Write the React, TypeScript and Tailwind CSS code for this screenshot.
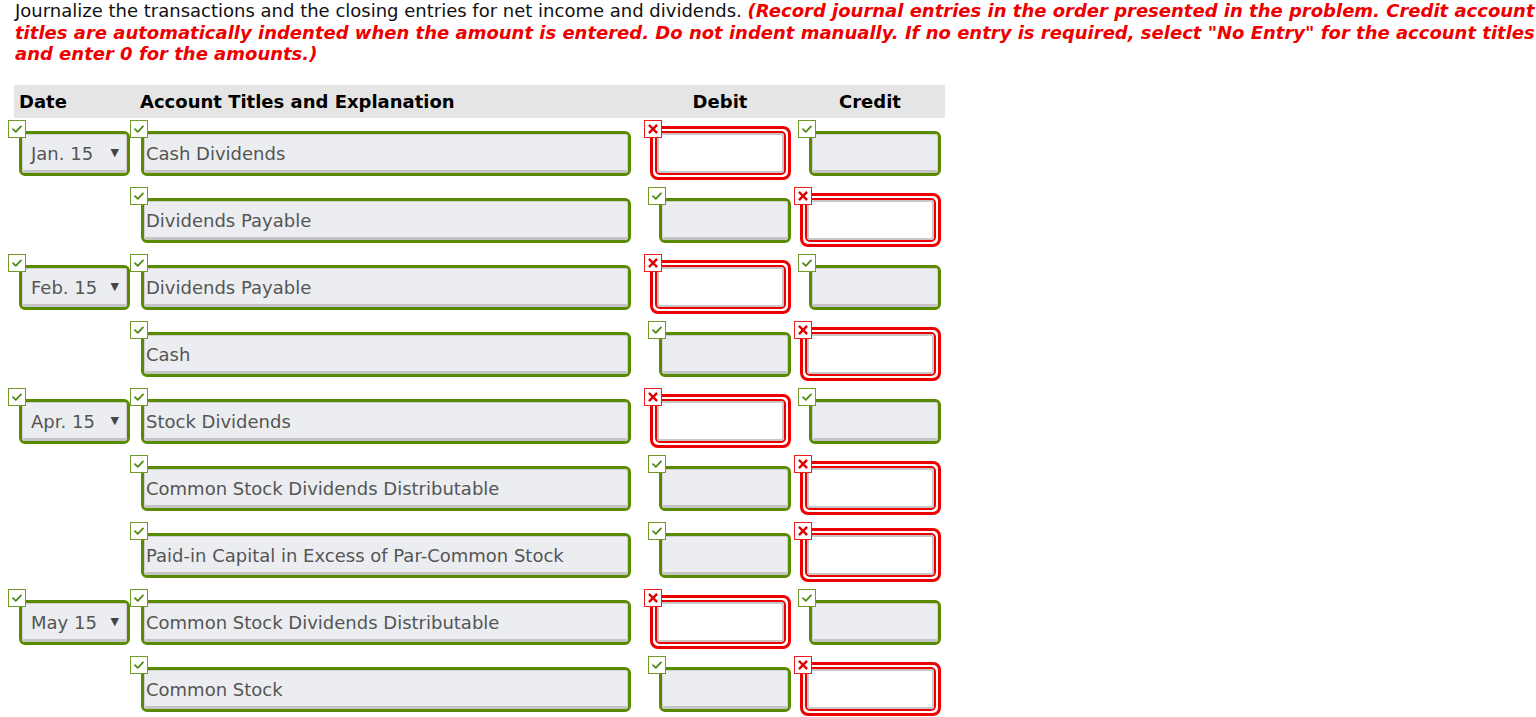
import React from "react";

type Row = {
  date?: string;
  account: string;
  debitRed: boolean;
};

const rows: Row[] = [
  { date: "Jan. 15", account: "Cash Dividends", debitRed: true },
  { account: "Dividends Payable", debitRed: false },
  { date: "Feb. 15", account: "Dividends Payable", debitRed: true },
  { account: "Cash", debitRed: false },
  { date: "Apr. 15", account: "Stock Dividends", debitRed: true },
  { account: "Common Stock Dividends Distributable", debitRed: false },
  { account: "Paid-in Capital in Excess of Par-Common Stock", debitRed: false },
  { date: "May 15", account: "Common Stock Dividends Distributable", debitRed: true },
  { account: "Common Stock", debitRed: false },
];

function CheckBadge({ className }: { className: string }) {
  return (
    <div className={`absolute w-[18px] h-[18px] bg-white border border-[#6f9a2a] flex items-center justify-center ${className}`}>
      <svg width="12" height="10" viewBox="0 0 12 10">
        <path d="M2 5.2 L4.8 7.8 L10 2.4" fill="none" stroke="#4f8a10" strokeWidth="1.8" strokeLinecap="round" strokeLinejoin="round" />
      </svg>
    </div>
  );
}

function XBadge() {
  return (
    <div className="absolute -left-[6px] -top-[6px] w-[18px] h-[18px] bg-white border border-[#ee1c1c] flex items-center justify-center">
      <svg width="10" height="10" viewBox="0 0 10 10">
        <path d="M1.8 1.8 L8.2 8.2 M8.2 1.8 L1.8 8.2" fill="none" stroke="#e00000" strokeWidth="2.4" strokeLinecap="square" />
      </svg>
    </div>
  );
}

function GreenField({ w, children }: { w: string; children?: React.ReactNode }) {
  return (
    <div className={`relative ${w} h-[45px]`}>
      <div className="h-full rounded-[6px] border-[3px] border-[#5a8a00]">
        <div className="h-full rounded-[3px] bg-[#ebedf0] border border-[#cfcfcf] border-b-[3px] border-b-[#c4c4c4] flex items-center pl-[1px] pt-[3px] text-[18px] text-[#555555] whitespace-nowrap">
          {children}
        </div>
      </div>
      <CheckBadge className="-left-[11px] -top-[11px]" />
    </div>
  );
}

function RedField() {
  return (
    <div className="relative w-[141px] h-[54px]">
      <div className="h-full rounded-[8px] border-[3px] border-[#ee0000] bg-white p-[2px]">
        <div className="h-full rounded-[5px] border-2 border-[#ee0000]">
          <div className="h-full rounded-[3px] border-2 border-[#c8c8c8] bg-white" />
        </div>
      </div>
      <XBadge />
    </div>
  );
}

function AmountCell({ red }: { red: boolean }) {
  return red ? (
    <div className="pt-[8px]">
      <RedField />
    </div>
  ) : (
    <div className="pt-[13px] pl-[9px]">
      <GreenField w="w-[132px]" />
    </div>
  );
}

export default function App() {
  return (
    <div className="bg-white w-[1536px] h-[717px] overflow-hidden" style={{ fontFamily: '"DejaVu Sans", Verdana, sans-serif' }}>
      <div className="pl-[15px] pr-0 text-[18px] leading-[21.5px] text-[#111111]">
        Journalize the transactions and the closing entries for net income and dividends.{" "}
        <span className="text-[#ee0000] font-bold italic">
          (Record journal entries in the order presented in the problem. Credit account titles are automatically indented when the amount is entered. Do not indent manually. If no entry is required, select "No Entry" for the account titles and enter 0 for the amounts.)
        </span>
      </div>
      <div className="mt-[20px] ml-[14px] w-[931px] h-[33px] bg-[#e5e5e5] flex items-center text-[18px] font-bold text-black">
        <div className="w-[126px] pl-[5px]">Date</div>
        <div className="w-[505px]">Account Titles and Explanation</div>
        <div className="w-[150px] text-center">Debit</div>
        <div className="w-[150px] text-center">Credit</div>
      </div>
      <div>
        {rows.map((r, i) => (
          <div key={i} className="flex h-[67px]">
            <div className="w-[141px] pl-[19px] pt-[13px]">
              {r.date && (
                <GreenField w="w-[111px]">
                  <div className="flex w-full items-center justify-between pl-[7px] pr-[7px]">
                    <span>{r.date}</span>
                    <span className="text-[11px] text-[#444444]">▼</span>
                  </div>
                </GreenField>
              )}
            </div>
            <div className="w-[509px] pt-[13px]">
              <GreenField w="w-[490px]">{r.account}</GreenField>
            </div>
            <div className="w-[150px]">
              <AmountCell red={r.debitRed} />
            </div>
            <div className="w-[150px]">
              <AmountCell red={!r.debitRed} />
            </div>
          </div>
        ))}
      </div>
    </div>
  );
}
